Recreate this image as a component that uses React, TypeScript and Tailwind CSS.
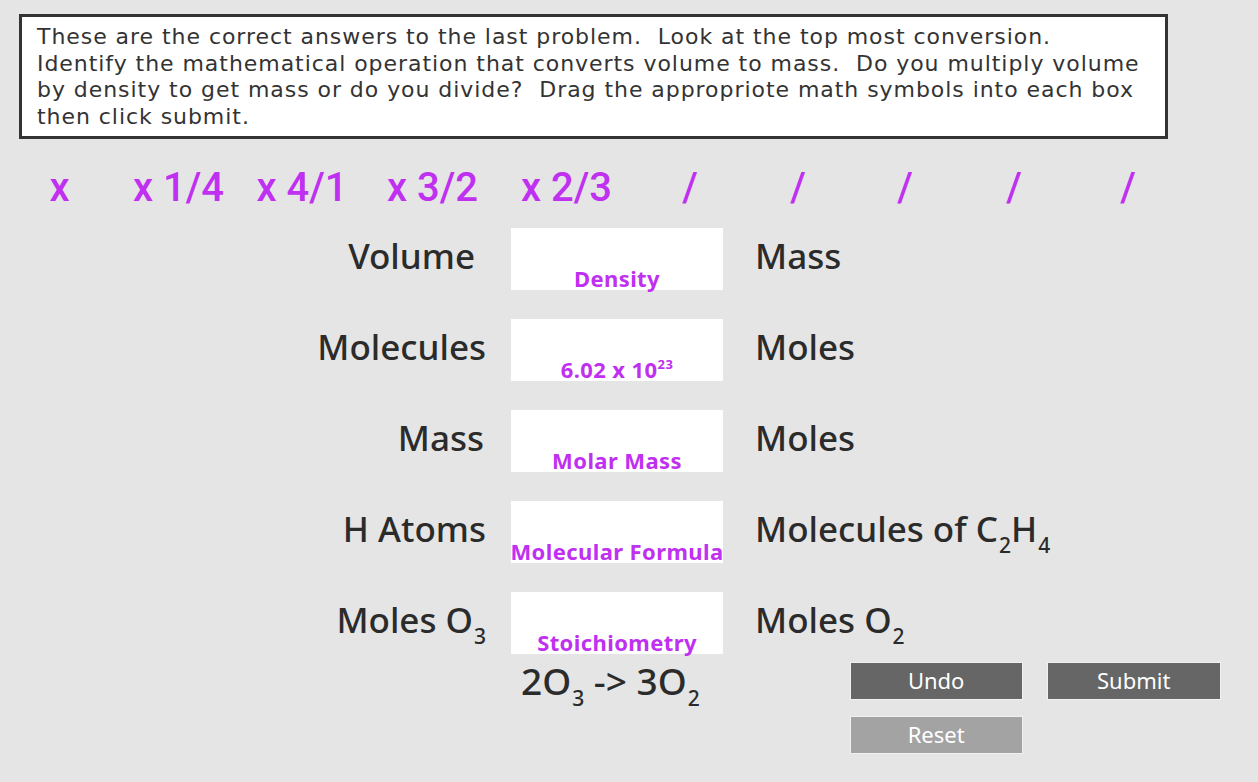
import React from "react";

const font = { fontFamily: '"Noto Sans", "DejaVu Sans", sans-serif' };

const tiles = [
  { label: "x", w: "w-[119px]" },
  { label: "x 1/4", w: "w-[119px]" },
  { label: "x 4/1", w: "w-[128px]" },
  { label: "x 3/2", w: "w-[133px]" },
  { label: "x 2/3", w: "w-[135px]" },
  { label: "/", w: "w-[112px]" },
  { label: "/", w: "w-[104px]" },
  { label: "/", w: "w-[110px]" },
  { label: "/", w: "w-[108px]" },
  { label: "/", w: "w-[120px]" },
];

const Sub = ({ children }: { children: React.ReactNode }) => (
  <sub className="text-[21px] -bottom-[11px] ml-[1px]">{children}</sub>
);

type Row = {
  left: React.ReactNode;
  answer: React.ReactNode;
  right: React.ReactNode;
  leftPad?: string;
};

const rows: Row[] = [
  { left: "Volume", answer: "Density", right: "Mass", leftPad: "pr-[11px]" },
  {
    left: "Molecules",
    answer: (
      <>
        6.02 x 10<sup className="text-[13px] -top-[9px]">23</sup>
      </>
    ),
    right: "Moles",
  },
  { left: "Mass", answer: "Molar Mass", right: "Moles", leftPad: "pr-[2px]" },
  {
    left: "H Atoms",
    answer: "Molecular Formula",
    right: (
      <>
        Molecules of C<Sub>2</Sub>H<Sub>4</Sub>
      </>
    ),
  },
  {
    left: (
      <>
        Moles O<Sub>3</Sub>
      </>
    ),
    answer: "Stoichiometry",
    right: (
      <>
        Moles O<Sub>2</Sub>
      </>
    ),
  },
];

export default function App() {
  return (
    <div className="w-[1258px] h-[782px] bg-[#e5e5e5] overflow-hidden" style={font}>
      <div className="pt-[14px] pl-[19px]">
        <div
          className="w-[1149px] h-[125px] border-[3px] border-[#333333] bg-white px-[15px] pt-[7px] text-[22px] leading-[26.5px] tracking-[0.95px] text-[#333333]"
          style={{ fontFamily: '"DejaVu Sans", sans-serif' }}
        >
          These are the correct answers to the last problem.&nbsp; Look at the top most conversion.
          <br />
          Identify the mathematical operation that converts volume to mass.&nbsp; Do you multiply volume
          <br />
          by density to get mass or do you divide?&nbsp; Drag the appropriote math symbols into each box
          <br />
          then click submit.
        </div>
      </div>

      <div
        className="flex mt-[28px] h-[42px] items-center text-[40px] font-medium leading-none text-[#c030f0]"
        style={{ fontFamily: 'Roboto, "Noto Sans", sans-serif' }}
      >
        {tiles.map((t, i) => (
          <div key={i} className={`${t.w} text-center`}>
            {t.label}
          </div>
        ))}
      </div>

      <div className="mt-[19px] flex flex-col gap-[29px]">
        {rows.map((r, i) => (
          <div key={i} className="flex items-center h-[62px]">
            <div
              className={`w-[486px] pb-[8px] text-right text-[35px] font-medium leading-none text-[#2b2b2b] ${r.leftPad ?? ""}`}
            >
              {r.left}
            </div>
            <div className="ml-[25px] w-[212px] h-[62px] bg-white flex items-end justify-center">
              <span className="text-[22px] tracking-[0.4px] font-bold leading-none text-[#c030f0] whitespace-nowrap pb-[1px]">
                {r.answer}
              </span>
            </div>
            <div className="ml-[32px] pb-[8px] text-[35px] font-medium leading-none text-[#2b2b2b]">
              {r.right}
            </div>
          </div>
        ))}
      </div>

      <div className="flex">
        <div className="ml-[521px] mt-[8px] text-[37px] font-medium leading-none text-[#2b2b2b] whitespace-nowrap">
          2O<Sub>3</Sub> -&gt; 3O<Sub>2</Sub>
        </div>
        <div className="ml-[150px] mt-[8px] grid grid-cols-2 gap-x-[23px] gap-y-[16px]">
          <button className="w-[173px] h-[38px] bg-[#666666] border border-[#f0f0f0] text-white text-[22px] leading-none pb-[2px]">
            Undo
          </button>
          <button className="w-[174px] h-[38px] bg-[#666666] border border-[#f0f0f0] text-white text-[22px] leading-none pb-[2px]">
            Submit
          </button>
          <button className="w-[173px] h-[38px] bg-[#a3a3a3] border border-[#f0f0f0] text-white text-[22px] leading-none pb-[2px]">
            Reset
          </button>
        </div>
      </div>
    </div>
  );
}
